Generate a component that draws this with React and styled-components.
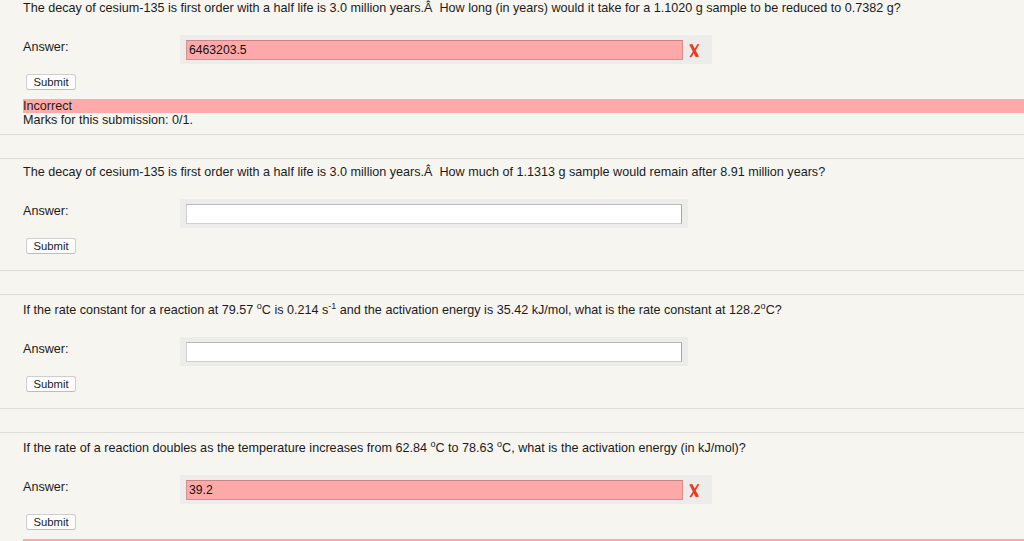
import React from "react";
import styled, { createGlobalStyle } from "styled-components";

const Global = createGlobalStyle`
  html, body { margin: 0; padding: 0; background: #f6f5f0; }
  body { font-family: "Liberation Sans", Arial, Helvetica, sans-serif; color: #1b1b1b; overflow: hidden; }
`;

const Page = styled.div`
  width: 1024px;
  height: 541px;
  overflow: hidden;
  background: #f6f5f0;
`;

const Question = styled.section`
  border-top: ${(p) => (p.$first ? "none" : "1px solid #dcdcda")};
  border-bottom: 1px solid #dcdcda;
  padding: ${(p) => (p.$first ? "2px" : "7px")} 0 7px 23px;
  margin-bottom: 23px;
`;

const QText = styled.p`
  margin: 0;
  font-size: 12.6px;
  line-height: 13px;
  sup {
    font-size: 9px;
    line-height: 8px;
  }
`;

const AnswerRow = styled.div`
  display: flex;
  align-items: flex-start;
  margin-top: 20px;
`;

const Label = styled.span`
  width: 157px;
  font-size: 12.6px;
  line-height: 13px;
  padding-top: 6px;
`;

const AnswerBox = styled.div`
  display: flex;
  align-items: center;
  gap: 5px;
  background: #ececeb;
  padding: 5px 6px 4px 6px;
`;

const Input = styled.input`
  box-sizing: border-box;
  width: ${(p) => (p.$wrong ? "497px" : "496px")};
  height: 20px;
  margin: 0;
  padding: 0 2px;
  font-family: "Liberation Sans", Arial, sans-serif;
  font-size: 12.2px;
  color: #111;
  background: ${(p) => (p.$wrong ? "#fda9a9" : "#ffffff")};
  border: 1px solid ${(p) => (p.$wrong ? "#d98f8f" : "#cfcfcf")};
  border-top-color: ${(p) => (p.$wrong ? "#c98585" : "#b9b9b9")};
  border-right-color: ${(p) => (p.$wrong ? "#d98f8f" : "#a9a9a9")};
  outline: none;
`;

const Mark = styled.svg`
  width: 12px;
  height: 15px;
  margin-right: 6px;
  flex-shrink: 0;
`;

const SubmitButton = styled.button`
  display: block;
  box-sizing: border-box;
  width: 50px;
  height: 16px;
  margin: 10px 0 9px 3px;
  padding: 0;
  font-family: "Liberation Sans", Arial, sans-serif;
  font-size: 11.3px;
  line-height: 14px;
  color: #222;
  background: #ffffff;
  border: 1px solid #cdcdcd;
  border-bottom-color: #bdbdbd;
  border-radius: 3px;
`;

const Feedback = styled.div`
  font-size: 12.6px;
  line-height: 14px;
`;

const Outcome = styled.div`
  background: #ffaaaa;
  height: 14px;
  line-height: 14px;
`;

const CrossIcon = () => (
  <Mark viewBox="0 0 12 15">
    <path d="M1.2 1.5 L4.3 1 L11 13.6 L7.8 14.2 Z" fill="#ec3a1c" />
    <path d="M9.6 1 L11.4 1.3 L3.4 14.3 L1.4 14 Z" fill="#ec3a1c" />
  </Mark>
);

const Block = ({ first, text, value, wrong }) => (
  <Question $first={first}>
    <QText>{text}</QText>
    <AnswerRow>
      <Label>Answer:</Label>
      <AnswerBox>
        <Input $wrong={wrong} defaultValue={value} readOnly />
        {wrong && <CrossIcon />}
      </AnswerBox>
    </AnswerRow>
    <SubmitButton>Submit</SubmitButton>
    {wrong && (
      <Feedback>
        <Outcome>Incorrect</Outcome>
        <div>Marks for this submission: 0/1.</div>
      </Feedback>
    )}
  </Question>
);

export default function App() {
  return (
    <Page>
      <Global />
      <Block
        first
        wrong
        value="6463203.5"
        text={
          <>
            The decay of cesium-135 is first order with a half life is 3.0 million years.Â&nbsp; How long (in
            years) would it take for a 1.1020 g sample to be reduced to 0.7382 g?
          </>
        }
      />
      <Block
        value=""
        text={
          <>
            The decay of cesium-135 is first order with a half life is 3.0 million years.Â&nbsp; How much of
            1.1313 g sample would remain after 8.91 million years?
          </>
        }
      />
      <Block
        value=""
        text={
          <>
            If the rate constant for a reaction at 79.57 <sup>o</sup>C is 0.214 s<sup>-1</sup> and the activation
            energy is 35.42 kJ/mol, what is the rate constant at 128.2<sup>o</sup>C?
          </>
        }
      />
      <Block
        wrong
        value="39.2"
        text={
          <>
            If the rate of a reaction doubles as the temperature increases from 62.84 <sup>o</sup>C to 78.63{" "}
            <sup>o</sup>C, what is the activation energy (in kJ/mol)?
          </>
        }
      />
    </Page>
  );
}
